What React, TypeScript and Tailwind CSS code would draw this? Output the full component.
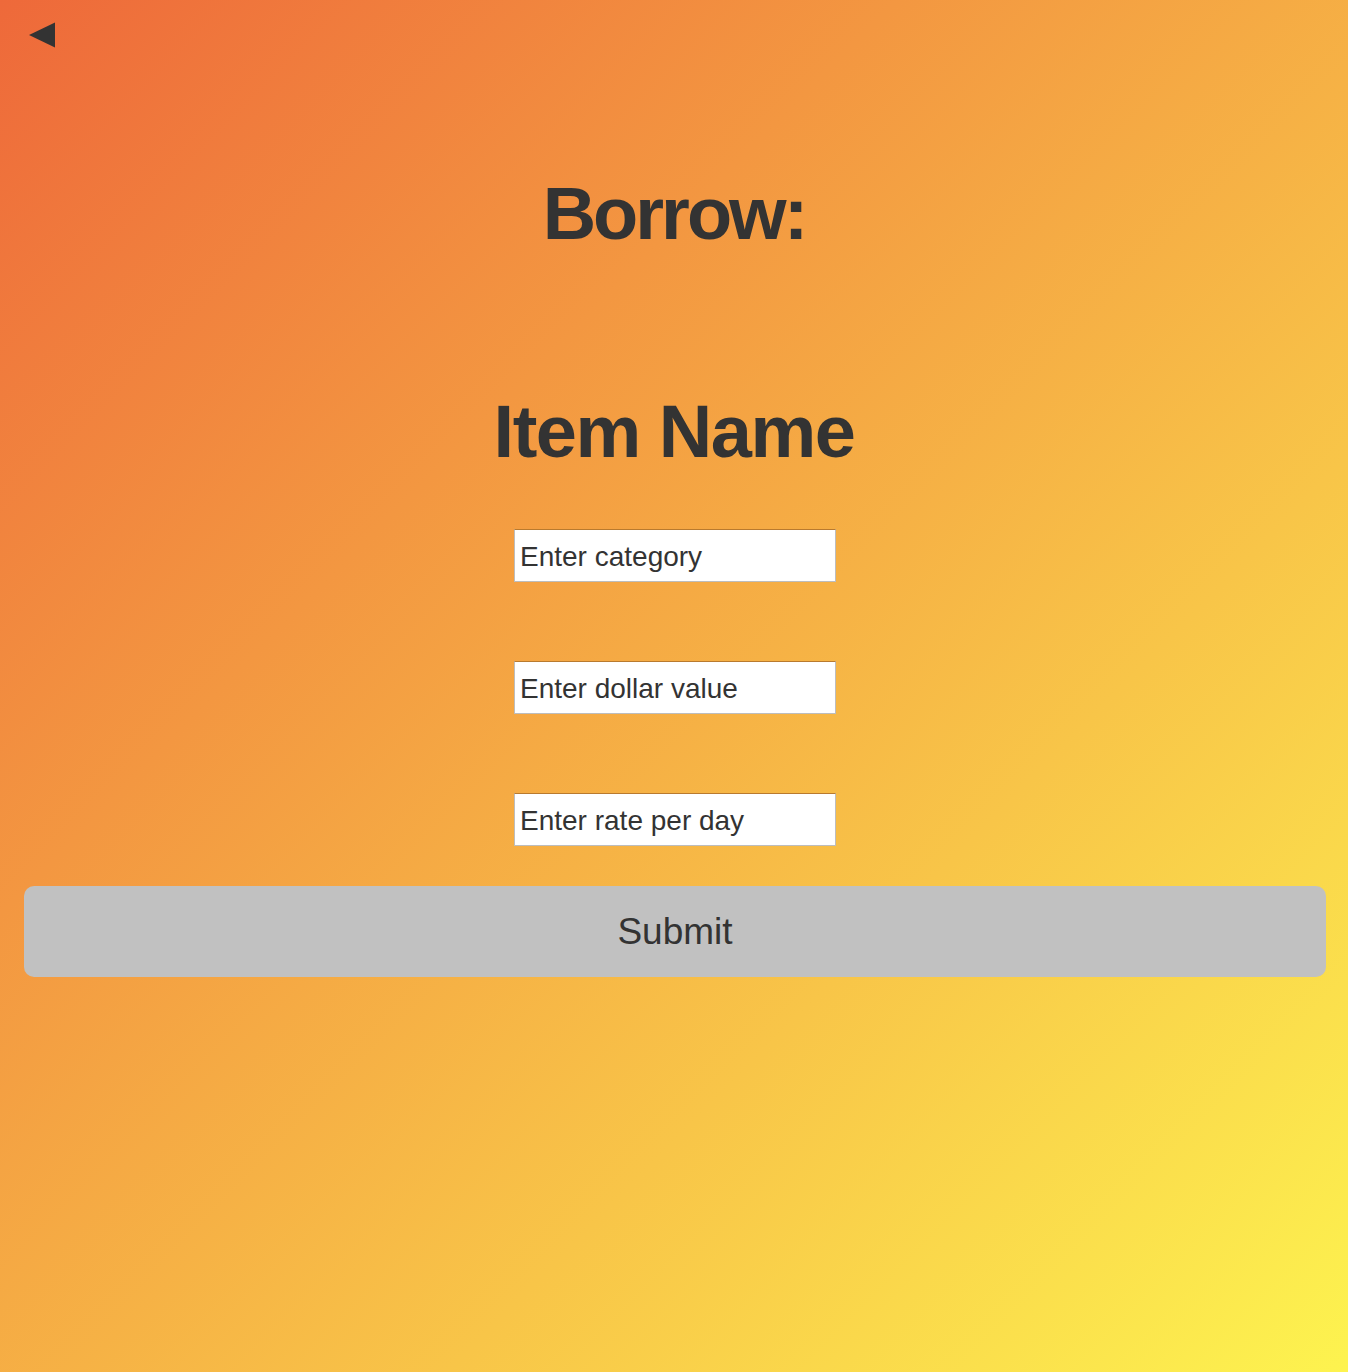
import React from 'react';

const fields = ['Enter category', 'Enter dollar value', 'Enter rate per day'];

const App: React.FC = () => {
  return (
    <div
      className="min-h-screen w-full bg-[linear-gradient(to_bottom_right,#ee693a,#fdf34f)] text-[#333]"
      style={{ fontFamily: '"Liberation Sans", Arial, sans-serif' }}
    >
      <div className="pt-[22px] pl-[29px] h-[48px]">
        <button className="block w-[26px] h-[26px]" aria-label="Back">
          <svg width="26" height="26" viewBox="0 0 26 26">
            <polygon points="0,13 26,0.5 26,25.5" fill="#333" />
          </svg>
        </button>
      </div>

      <h1 className="mt-[129px] text-center text-[74px] leading-[74px] font-bold tracking-[-3px]">Borrow:</h1>
      <h2 className="mt-[144px] text-center text-[74px] leading-[74px] font-bold tracking-[-1.5px]">Item Name</h2>

      <div className="mt-[60px] pl-[2px] flex flex-col items-center gap-[79px]">
        {fields.map((f) => (
          <input
            key={f}
            type="text"
            placeholder={f}
            className="w-[322px] h-[53px] bg-white border border-[#bdbdbd] border-t-[#b97a2e] pl-[5px] pt-[2px] text-[28px] text-[#333] placeholder:text-[#333] outline-none"
            style={{ fontFamily: '"Liberation Sans", Arial, sans-serif' }}
          />
        ))}
      </div>

      <div className="mt-[40px] pl-[24px] pr-[22px]">
        <button className="w-full h-[91px] rounded-[10px] bg-[#c1c1c1] text-[37px] text-[#333]">Submit</button>
      </div>
    </div>
  );
};

export default App;
